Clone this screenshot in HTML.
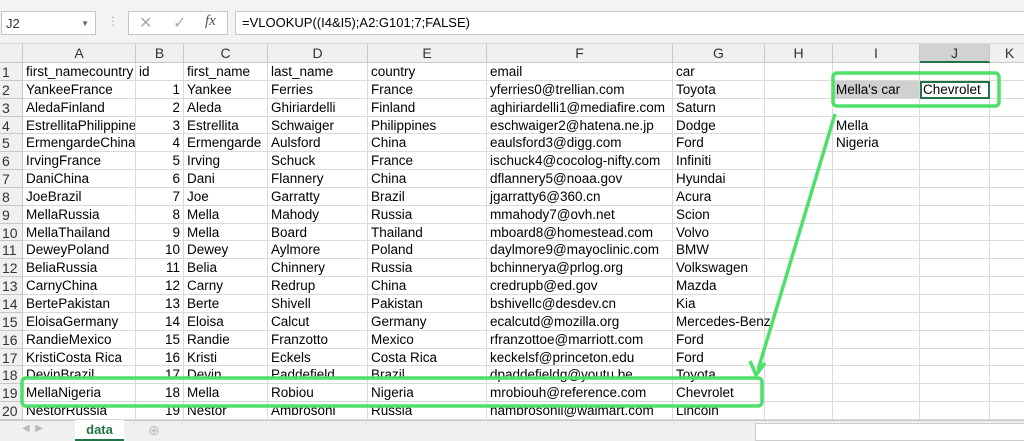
<!DOCTYPE html><html><head><style>
body{margin:0;width:1024px;height:440px;overflow:hidden;background:#fff;font-family:"Liberation Sans",sans-serif;position:relative}
.top{position:absolute;left:0;top:0;width:1024px;height:43px;background:#f3f3f3;border-bottom:1px solid #d4d4d4}
.nb{position:absolute;left:1px;top:11px;width:95px;height:24px;background:#fff;border:1px solid #c6c6c6;font-size:13px;line-height:23px;box-sizing:border-box;padding-left:4px;color:#333}
.fb{position:absolute;left:235px;top:11px;width:790px;height:24px;background:#fff;border:1px solid #c6c6c6;box-sizing:border-box;font-size:13px;line-height:22px;padding-left:6px}
.ic{position:absolute;top:11px;height:24px;background:#fff;border:1px solid #c6c6c6;left:128px;width:100px;box-sizing:border-box;color:#aaa;font-size:16px}
.grid{position:absolute;left:0;top:44px;display:grid;grid-template-columns:23px 113px 48px 84px 100px 119px 186px 92px 68px 87px 70px 40px;grid-template-rows:19px repeat(20,17.85px);font-size:13.5px}
.grid div{border-right:1px solid #dadada;border-bottom:1px solid #dadada;box-sizing:border-box;white-space:nowrap;overflow:visible;padding-left:3px;line-height:18px;color:#000}
.grid .h{background:#f0f0f0;text-align:center;padding:0;color:#333;border-color:#c8c8c8;font-size:14px}
.grid .r{background:#f0f0f0;padding:0 0 0 2px;color:#333;border-color:#c8c8c8;font-size:14px}
.grid .n{text-align:right;padding-right:3px}
.bot{position:absolute;left:0;top:420px;width:1024px;height:20px;background:#f0f0f0;border-top:1px solid #c8c8c8}
.tab{position:absolute;left:75px;top:-1px;width:49px;height:21px;background:#fff;color:#217346;font-weight:bold;font-size:13px;text-align:center;line-height:19px;border-bottom:2px solid #217346;box-sizing:border-box}
</style></head><body>
<div class="top">
<div class="nb">J2<span style="position:absolute;right:6px;font-size:8px;color:#666">▼</span></div>
<div style="position:absolute;left:107px;top:14px;color:#aaa;font-size:12px">⋮</div>
<div class="ic"><span style="position:absolute;left:10px;top:1px">✕</span><span style="position:absolute;left:44px;top:1px">✓</span><span style="position:absolute;left:76px;top:1px;color:#555;font-family:'Liberation Serif';font-style:italic;font-size:15px">fx</span></div>
<div class="fb">=VLOOKUP((I4&amp;I5);A2:G101;7;FALSE)</div>
</div>
<div class="grid" id="g"></div>
<div class="bot"><span style="position:absolute;left:22px;top:2px;color:#bbb;font-size:10px">◀ &nbsp;▶</span><div class="tab">data</div><span style="position:absolute;left:148px;top:1px;color:#bbb;font-size:14px">⊕</span>
<div style="position:absolute;left:755px;top:2px;width:268px;height:16px;background:#fff;border:1px solid #ccc"></div></div>
<svg style="position:absolute;left:0;top:0" width="1024" height="440">
<rect x="833" y="73" width="166" height="33" rx="4" fill="none" stroke="#4ee06a" stroke-width="3.5"/>
<rect x="22" y="378" width="740" height="28" rx="4" fill="none" stroke="#4ee06a" stroke-width="3.5"/>
<line x1="835" y1="114" x2="758" y2="370" stroke="#4ee06a" stroke-width="3.5"/>
<polyline points="750,361 756,375 765,363" fill="none" stroke="#4ee06a" stroke-width="3.5"/>
</svg>
<script>
var d=[["first_namecountry","id","first_name","last_name","country","email","car"],
["YankeeFrance",1,"Yankee","Ferries","France","yferries0@trellian.com","Toyota"],
["AledaFinland",2,"Aleda","Ghiriardelli","Finland","aghiriardelli1@mediafire.com","Saturn"],
["EstrellitaPhilippines",3,"Estrellita","Schwaiger","Philippines","eschwaiger2@hatena.ne.jp","Dodge"],
["ErmengardeChina",4,"Ermengarde","Aulsford","China","eaulsford3@digg.com","Ford"],
["IrvingFrance",5,"Irving","Schuck","France","ischuck4@cocolog-nifty.com","Infiniti"],
["DaniChina",6,"Dani","Flannery","China","dflannery5@noaa.gov","Hyundai"],
["JoeBrazil",7,"Joe","Garratty","Brazil","jgarratty6@360.cn","Acura"],
["MellaRussia",8,"Mella","Mahody","Russia","mmahody7@ovh.net","Scion"],
["MellaThailand",9,"Mella","Board","Thailand","mboard8@homestead.com","Volvo"],
["DeweyPoland",10,"Dewey","Aylmore","Poland","daylmore9@mayoclinic.com","BMW"],
["BeliaRussia",11,"Belia","Chinnery","Russia","bchinnerya@prlog.org","Volkswagen"],
["CarnyChina",12,"Carny","Redrup","China","credrupb@ed.gov","Mazda"],
["BertePakistan",13,"Berte","Shivell","Pakistan","bshivellc@desdev.cn","Kia"],
["EloisaGermany",14,"Eloisa","Calcut","Germany","ecalcutd@mozilla.org","Mercedes-Benz"],
["RandieMexico",15,"Randie","Franzotto","Mexico","rfranzottoe@marriott.com","Ford"],
["KristiCosta Rica",16,"Kristi","Eckels","Costa Rica","keckelsf@princeton.edu","Ford"],
["DevinBrazil",17,"Devin","Paddefield","Brazil","dpaddefieldg@youtu.be","Toyota"],
["MellaNigeria",18,"Mella","Robiou","Nigeria","mrobiouh@reference.com","Chevrolet"],
["NestorRussia",19,"Nestor","Ambrosoni","Russia","nambrosonii@walmart.com","Lincoln"]];
var h="<div class='h'></div>";
"ABCDEFGHIJK".split("").forEach(function(c){h+="<div class='h'"+(c=="J"?" style='background:#d2d2d2;border-bottom:2px solid #217346'":"")+">"+c+"</div>"});
for(var i=0;i<20;i++){h+="<div class='r'>"+(i+1)+"</div>";var r=d[i];
for(var j=0;j<7;j++){var v=r[j];var cl=(j==1&&i>0)?"n":"";
var st=(j==0)?"overflow:hidden":"";h+="<div class='"+cl+"' style='"+st+"'>"+v+"</div>";}
h+="<div></div>";
var I="",J="",si="",sj="";
if(i==1){I="Mella's car";J="Chevrolet";si="background:#d0d0d0";sj="outline:2px solid #217346;outline-offset:-2px";}
if(i==3)I="Mella";if(i==4)I="Nigeria";
h+="<div style='"+si+"'>"+I+"</div><div style='"+sj+"'>"+J+"</div><div></div>";}
document.getElementById("g").innerHTML=h;
</script>
</body></html>
